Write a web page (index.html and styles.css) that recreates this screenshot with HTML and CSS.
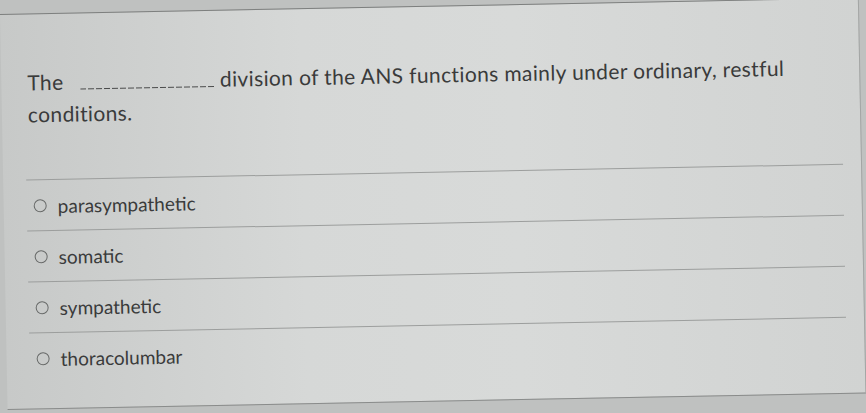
FILE: index.html
```html
<!DOCTYPE html>
<html lang="en">
<head>
  <meta charset="UTF-8">
  <meta name="viewport" content="width=device-width, initial-scale=1.0">
  <title>Quiz Question</title>
  <link rel="stylesheet" href="styles.css">
</head>
<body>
  <div class="card">
    <div class="question">
      The <span class="blank"></span> division of the ANS functions mainly under ordinary, restful conditions.
    </div>
    <ul class="answers">
      <li><span class="radio"></span>parasympathetic</li>
      <li><span class="radio"></span>somatic</li>
      <li><span class="radio"></span>sympathetic</li>
      <li><span class="radio"></span>thoracolumbar</li>
    </ul>
  </div>
</body>
</html>
```

FILE: styles.css
```css
body {
  margin: 0;
  height: 413px;
  overflow: hidden;
  font-family: Lato, "Open Sans", sans-serif;
  color: #3a3b3b;
  background: #bfc1c0;
}
.card {
  width: 858px;
  margin-top: 14px;
  padding: 52px 0 25px;
  border-top: 1px solid #7d7f7e;
  border-right: 1px solid #a3a5a4;
  border-bottom: 1px solid #8a8c8b;
  background: linear-gradient(to right, #c7c9c8, #d6d8d7 35%, #d8dad9 60%, #d1d3d2);
  transform: rotate(-1.1deg);
  transform-origin: 0 0;
}
.question {
  padding: 0 40px 0 26px;
  font-size: 21px;
  line-height: 32px;
  letter-spacing: 0.37px;
}
/* fill-in blank, drawn as long dashes */
.blank {
  display: inline-block;
  width: 134px;
  height: 1px;
  margin: 0 0 0 11px;
  background: repeating-linear-gradient(to right, #4a4b4b 0 6px, transparent 6px 8px);
  vertical-align: baseline;
}
.answers {
  list-style: none;
  margin: 49px 18px 0 23px;
  padding: 0;
}
.answers li {
  display: flex;
  align-items: center;
  gap: 11px;
  height: 50px;
  padding-left: 7px;
  border-top: 1px solid #9c9e9d;
  font-size: 19px;
}
.radio {
  width: 11px;
  height: 11px;
  border: 1.5px solid #676968;
  border-radius: 50%;
}
```
